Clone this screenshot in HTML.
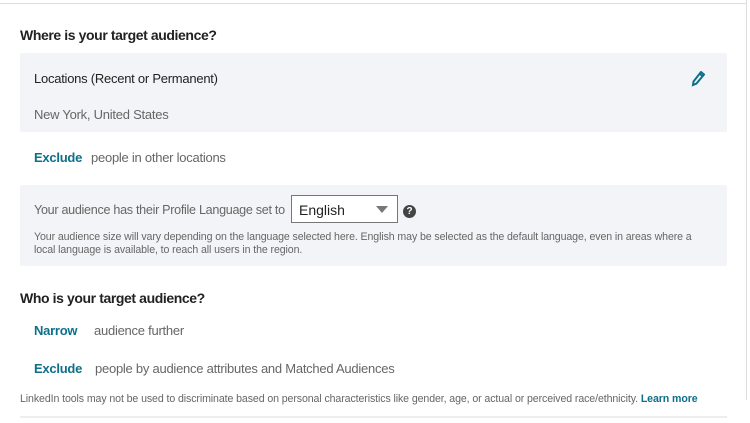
<!DOCTYPE html>
<html><head><style>
body{margin:0;width:750px;height:423px;background:#fff;font-family:"Liberation Sans",sans-serif;position:relative;overflow:hidden;color:#222}
.a{position:absolute;white-space:nowrap}
.box{position:absolute;left:20px;width:707px;background:#f2f4f7;border-radius:2px}
.h{font-size:14px;font-weight:bold;color:#222;letter-spacing:-0.4px}
.t{font-size:13px;letter-spacing:-0.25px}
.g{color:#666}
.l{color:#0e6f8a;font-weight:bold}
</style></head><body>
<div class="a" style="left:0;top:3px;width:746px;height:1px;background:#ddd"></div>
<div class="a" style="left:746px;top:0;width:1px;height:400px;background:#ddd"></div>
<div class="a h" style="left:20px;top:27px">Where is your target audience?</div>
<div class="box" style="top:53px;height:79px"></div>
<div class="a t" style="left:34px;top:71px;color:#222">Locations (Recent or Permanent)</div>
<svg class="a" style="left:691px;top:71px" width="14" height="16" viewBox="0 0 14 16"><path d="M10 1l3 2.5-7.5 9L2 14l.5-3.5z M9 3l2.5 2" fill="none" stroke="#0e6f8a" stroke-width="2"/></svg>
<div class="a t g" style="left:34px;top:107px">New York, United States</div>
<div class="a t l" style="left:34px;top:150px">Exclude</div>
<div class="a t g" style="left:91px;top:150px">people in other locations</div>
<div class="box" style="top:185px;height:81px"></div>
<div class="a g" style="left:34px;top:203px;font-size:12.6px;letter-spacing:-0.3px">Your audience has their Profile Language set to</div>
<div class="a" style="left:291px;top:195px;width:107px;height:28px;border:1px solid #777;background:#fff;box-sizing:border-box"></div>
<div class="a" style="left:299px;top:202px;font-size:14px;color:#222">English</div>
<div class="a" style="left:376px;top:206px;width:0;height:0;border-left:6px solid transparent;border-right:6px solid transparent;border-top:7px solid #777"></div>
<div class="a" style="left:403px;top:205px;width:13px;height:13px;border-radius:50%;background:#444;color:#fff;font-size:10px;font-weight:bold;text-align:center;line-height:13px">?</div>
<div class="a g" style="left:34px;top:231px;font-size:10.6px;letter-spacing:-0.1px;line-height:13px">Your audience size will vary depending on the language selected here. English may be selected as the default language, even in areas where a<br>local language is available, to reach all users in the region.</div>
<div class="a h" style="left:20px;top:290px">Who is your target audience?</div>
<div class="a t l" style="left:34px;top:323px">Narrow</div>
<div class="a t g" style="left:94px;top:323px">audience further</div>
<div class="a t l" style="left:34px;top:361px">Exclude</div>
<div class="a t g" style="left:95px;top:361px">people by audience attributes and Matched Audiences</div>
<div class="a g" style="left:20px;top:393px;font-size:10.6px;letter-spacing:-0.1px">LinkedIn tools may not be used to discriminate based on personal characteristics like gender, age, or actual or perceived race/ethnicity. <span class="l">Learn more</span></div>
<div class="a" style="left:20px;top:416px;width:707px;height:2px;background:#eee"></div>
</body></html>
